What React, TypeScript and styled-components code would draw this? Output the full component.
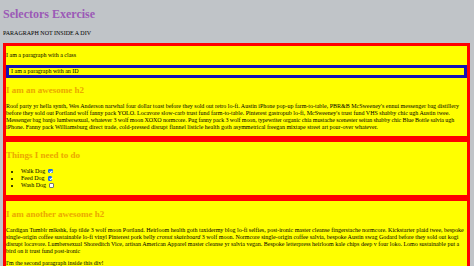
import React from 'react';
import styled, { createGlobalStyle } from 'styled-components';

const GlobalStyle = createGlobalStyle`
  html {
    background: #c0c4c8;
  }

  body {
    margin: 0 4px 0 3px;
    font-family: 'Liberation Serif', 'Times New Roman', serif;
    font-size: 6px;
    line-height: 6.9px;
    color: #000;
  }
`;

const Title = styled.h1`
  font-size: 12px;
  line-height: 13.8px;
  margin: 8px 0;
  color: #9b59b6;
`;

const Paragraph = styled.p<{ $underline?: boolean }>`
  margin: 6px 0;
  text-decoration: ${(p) => (p.$underline ? 'underline' : 'none')};
`;

// the reference renders this stretch of copy a little tighter
const Tight = styled.span`
  letter-spacing: -0.09px;
`;

const Box = styled.div`
  border: 3px solid #ff0000;
  background: #ffff00;
`;

const IdParagraph = styled.p`
  margin: 6px 0;
  padding: 0 2px;
  border: 3px solid #1414b4;
`;

const Heading = styled.h2`
  font-size: 9px;
  line-height: 10.35px;
  margin: 7.5px 0;
  color: #eba800;
`;

const TodoList = styled.ul`
  margin: 6px 0;
  padding-left: 15px;
`;

const TodoItem = styled.li`
  line-height: 7.2px;
`;

const Check = styled.input`
  appearance: none;
  box-sizing: border-box;
  width: 4.5px;
  height: 4.5px;
  margin: 0 0 0 1.5px;
  vertical-align: -0.5px;
  border: 0.5px solid #767676;
  border-radius: 1px;
  background: #fff;
  position: relative;

  &:checked {
    background: #1a6fe8;
    border-color: #1a6fe8;
  }

  &:checked::after {
    content: '';
    position: absolute;
    left: 1.1px;
    top: 0.3px;
    width: 1px;
    height: 2px;
    border: solid #fff;
    border-width: 0 0.6px 0.6px 0;
    transform: rotate(45deg);
  }
`;

const todos = [
  { label: 'Walk Dog', done: true },
  { label: 'Feed Dog', done: true },
  { label: 'Wash Dog', done: false },
];

export default function App() {
  return (
    <>
      <GlobalStyle />
      <Title>Selectors Exercise</Title>
      <Paragraph>PARAGRAPH NOT INSIDE A DIV</Paragraph>
      <Box>
        <Paragraph>I am a paragraph with a class</Paragraph>
        <IdParagraph>I am a paragraph with an ID</IdParagraph>
        <Heading>I am an awesome h2</Heading>
        <Paragraph>
          Roof party yr hella synth, Wes Anderson narwhal four dollar toast before they sold out retro lo-fi.
          Austin iPhone pop-up farm-to-table, PBR&amp;B McSweeney's ennui messenger bag distillery before they
          sold out Portland wolf fanny pack YOLO. Locavore slow-carb trust fund farm-to-table. Pinterest
          gastropub lo-fi, McSweeney's trust fund VHS shabby chic ugh Austin twee.{' '}
          <Tight>
            Messenger bag banjo lumbersexual, whatever 3 wolf moon XOXO normcore. Pug fanny pack 3 wolf moon,
            typewriter organic chia mustache scenester seitan shabby chic Blue Bottle salvia ugh
          </Tight>{' '}
          iPhone. Fanny pack Williamsburg direct trade, cold-pressed disrupt flannel listicle health goth
          asymmetrical freegan mixtape street art pour-over whatever.
        </Paragraph>
      </Box>
      <Box>
        <Heading>Things I need to do</Heading>
        <TodoList>
          {todos.map((t) => (
            <TodoItem key={t.label}>
              {t.label} <Check type="checkbox" defaultChecked={t.done} />
            </TodoItem>
          ))}
        </TodoList>
      </Box>
      <Box>
        <Heading>I am another awesome h2</Heading>
        <Paragraph>
          Cardigan Tumblr mlkshk, fap tilde 3 wolf moon Portland. Heirloom health goth taxidermy blog lo-fi
          selfies, post-ironic master cleanse fingerstache normcore. Kickstarter plaid twee, bespoke
          single-origin coffee sustainable lo-fi vinyl Pinterest pork belly <em>cronut skateboard</em> 3 wolf
          moon. Normcore single-origin coffee salvia, bespoke Austin swag Godard before they sold out kogi
          disrupt locavore. Lumbersexual Shoreditch Vice, artisan American Apparel master cleanse yr salvia
          vegan. Bespoke letterpress heirloom kale chips deep v four loko. Lomo sustainable put a bird on it
          trust fund post-ironic
        </Paragraph>
        <Paragraph $underline>I'm the second paragraph inside this div!</Paragraph>
      </Box>
    </>
  );
}
